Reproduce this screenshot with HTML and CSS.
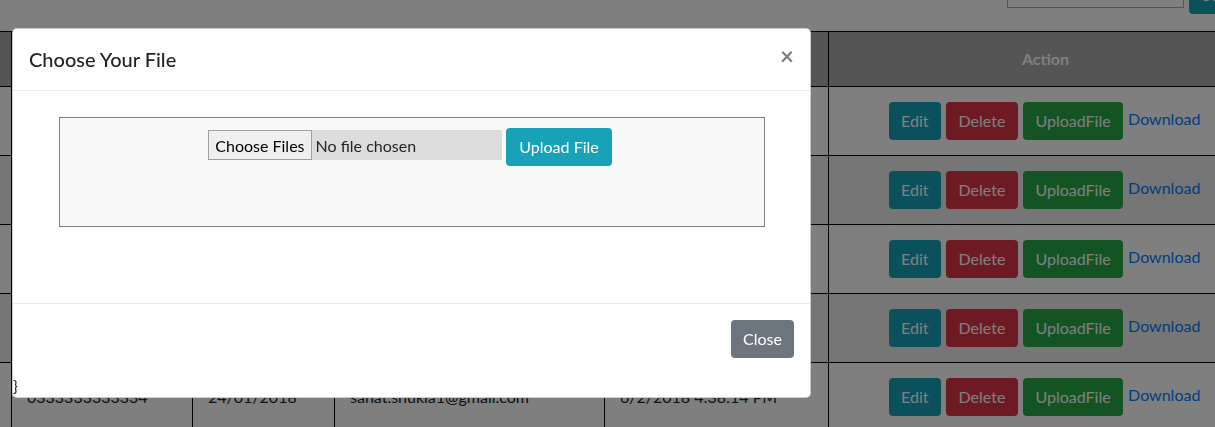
FILE: index.html
```html
<!DOCTYPE html>
<html lang="en">
<head>
    <meta charset="UTF-8">
    <meta name="viewport" content="width=device-width, initial-scale=1.0">
    <title>Records</title>
    <link rel="stylesheet" href="styles.css">
</head>
<body>

    <div class="page">
        <div class="toolbar">
            <input type="text" class="search-box">
            <button class="btn btn-info btn-search">Search</button>
        </div>

        <table class="records">
            <colgroup>
                <col style="width: 91px">
                <col style="width: 181px">
                <col style="width: 142px">
                <col style="width: 270px">
                <col style="width: 224px">
                <col style="width: 434px">
            </colgroup>
            <thead>
                <tr>
                    <th>Id</th>
                    <th>Mobile No</th>
                    <th>Date</th>
                    <th>Email</th>
                    <th>Created On</th>
                    <th>Action</th>
                </tr>
            </thead>
            <tbody>
                <tr>
                    <td>1</td>
                    <td>0333333333330</td>
                    <td>20/01/2018</td>
                    <td>sanat.shukla1@gmail.com</td>
                    <td>6/2/2018 4:30:02 PM</td>
                    <td>
                        <div class="actions">
                            <button class="btn btn-info">Edit</button>
                            <button class="btn btn-danger">Delete</button>
                            <button class="btn btn-success">UploadFile</button>
                            <a href="#">Download</a>
                        </div>
                    </td>
                </tr>
                <tr>
                    <td>2</td>
                    <td>0333333333331</td>
                    <td>21/01/2018</td>
                    <td>sanat.shukla1@gmail.com</td>
                    <td>6/2/2018 4:32:40 PM</td>
                    <td>
                        <div class="actions">
                            <button class="btn btn-info">Edit</button>
                            <button class="btn btn-danger">Delete</button>
                            <button class="btn btn-success">UploadFile</button>
                            <a href="#">Download</a>
                        </div>
                    </td>
                </tr>
                <tr>
                    <td>3</td>
                    <td>0333333333332</td>
                    <td>22/01/2018</td>
                    <td>sanat.shukla1@gmail.com</td>
                    <td>6/2/2018 4:34:11 PM</td>
                    <td>
                        <div class="actions">
                            <button class="btn btn-info">Edit</button>
                            <button class="btn btn-danger">Delete</button>
                            <button class="btn btn-success">UploadFile</button>
                            <a href="#">Download</a>
                        </div>
                    </td>
                </tr>
                <tr>
                    <td>4</td>
                    <td>0333333333333</td>
                    <td>23/01/2018</td>
                    <td>sanat.shukla1@gmail.com</td>
                    <td>6/2/2018 4:36:55 PM</td>
                    <td>
                        <div class="actions">
                            <button class="btn btn-info">Edit</button>
                            <button class="btn btn-danger">Delete</button>
                            <button class="btn btn-success">UploadFile</button>
                            <a href="#">Download</a>
                        </div>
                    </td>
                </tr>
                <tr>
                    <td>5</td>
                    <td>0333333333334</td>
                    <td>24/01/2018</td>
                    <td>sanat.shukla1@gmail.com</td>
                    <td>6/2/2018 4:38:14 PM</td>
                    <td>
                        <div class="actions">
                            <button class="btn btn-info">Edit</button>
                            <button class="btn btn-danger">Delete</button>
                            <button class="btn btn-success">UploadFile</button>
                            <a href="#">Download</a>
                        </div>
                    </td>
                </tr>
            </tbody>
        </table>
    </div>

    <div class="backdrop"></div>

    <div class="modal">
        <div class="modal-header">
            <h5 class="modal-title">Choose Your File</h5>
            <button class="close">&times;</button>
        </div>
        <div class="modal-body">
            <div class="upload-box">
                <input type="file" class="file-input" multiple>
                <button class="btn btn-info">Upload File</button>
            </div>
        </div>
        <div class="modal-footer">
            <button class="btn btn-secondary">Close</button>
        </div>
        <div class="stray">}</div>
    </div>

</body>
</html>
```

FILE: styles.css
```css
body {
    font-family: "Segoe UI", Lato, "Helvetica Neue", Arial, sans-serif;
    font-size: 16px;
    line-height: 1.5;
    color: #212529;
    background: #fff;
    margin: 0;
    overflow: hidden;
}
/* page is scrolled a little: search bar partly off the top, first column off the left */
.page {
    width: 1342px;
    margin: -30px 0 0 -80px;
}
.toolbar {
    display: flex;
    justify-content: flex-end;
    align-items: flex-start;
    gap: 5px;
    height: 44px;
    margin-bottom: 17px;
}
.search-box {
    width: 177px;
    height: 38px;
    box-sizing: border-box;
    border: 1px solid #aaa;
    border-radius: 0;
    background: #fff;
}
.btn-search {
    width: 73px;
    margin-top: 6px;
}
.btn {
    display: inline-block;
    font-family: inherit;
    font-size: 16px;
    line-height: 24px;
    padding: 6px 12px;
    border: 1px solid transparent;
    border-radius: 4px;
    color: #fff;
    cursor: pointer;
}
.btn-info {
    background-color: #17a2b8;
}
.btn-danger {
    background-color: #dc3545;
}
.btn-success {
    background-color: #28a745;
}
.btn-secondary {
    background-color: #6c757d;
}
.records {
    width: 1342px;
    table-layout: fixed;
    border-collapse: collapse;
}
.records th,
.records td {
    border: 1px solid #000;
    padding: 15px;
    vertical-align: middle;
    text-align: left;
    white-space: nowrap;
    overflow: hidden;
}
.records th {
    background: #aaa;
    color: #fff;
    font-weight: bold;
    text-align: center;
}
.records tbody tr:nth-child(even) {
    background: #ececec;
}
.actions {
    display: flex;
    justify-content: center;
    align-items: baseline;
    gap: 5px;
    padding-right: 2px;
}
.actions .btn {
    padding: 6px 11.5px;
}
.actions a {
    color: #007bff;
    text-decoration: none;
    position: relative;
    top: -2px;
}
.backdrop {
    position: fixed;
    inset: 0;
    background: rgba(0, 0, 0, 0.5);
}
.modal {
    position: fixed;
    top: 28px;
    left: 12px;
    width: 799px;
    box-sizing: border-box;
    background: #fff;
    border: 1px solid rgba(0, 0, 0, 0.2);
    border-radius: 5px;
}
.modal-header {
    display: flex;
    align-items: flex-start;
    padding: 15px 16px 16px;
    border-bottom: 1px solid #e9ecef;
}
.modal-title {
    margin: 0;
    font-size: 20px;
    font-weight: 500;
    line-height: 30px;
}
.close {
    margin: -15px -16px -16px auto;
    padding: 15px 16px 16px;
    background: none;
    border: none;
    font-family: inherit;
    font-size: 24px;
    font-weight: bold;
    line-height: 1;
    color: #000;
    opacity: 0.5;
}
.modal-body {
    padding: 16px;
}
.upload-box {
    display: flex;
    justify-content: center;
    align-items: flex-start;
    gap: 4px;
    height: 110px;
    box-sizing: border-box;
    margin: 10px 29px 60px 30px;
    padding: 10px 14px 10px 10px;
    background: #f9f9f9;
    border: 1px solid #808080;
}
.file-input {
    width: 294px;
    height: 30px;
    margin-top: 2px;
    font-family: inherit;
    font-size: 16px;
    background: #dcdcdc;
}
.file-input::file-selector-button {
    height: 30px;
    margin: 0 4px 0 0;
    padding: 0 6px;
    font-family: inherit;
    font-size: 16px;
    color: #000;
    background: #efefef;
    border: 1px solid #a0a0a0;
    border-radius: 0;
}
.modal-footer {
    display: flex;
    justify-content: flex-end;
    padding: 16px;
    border-top: 1px solid #e9ecef;
}
.modal-footer .btn {
    padding: 6px 11px;
}
.stray {
    line-height: 23px;
}
```
